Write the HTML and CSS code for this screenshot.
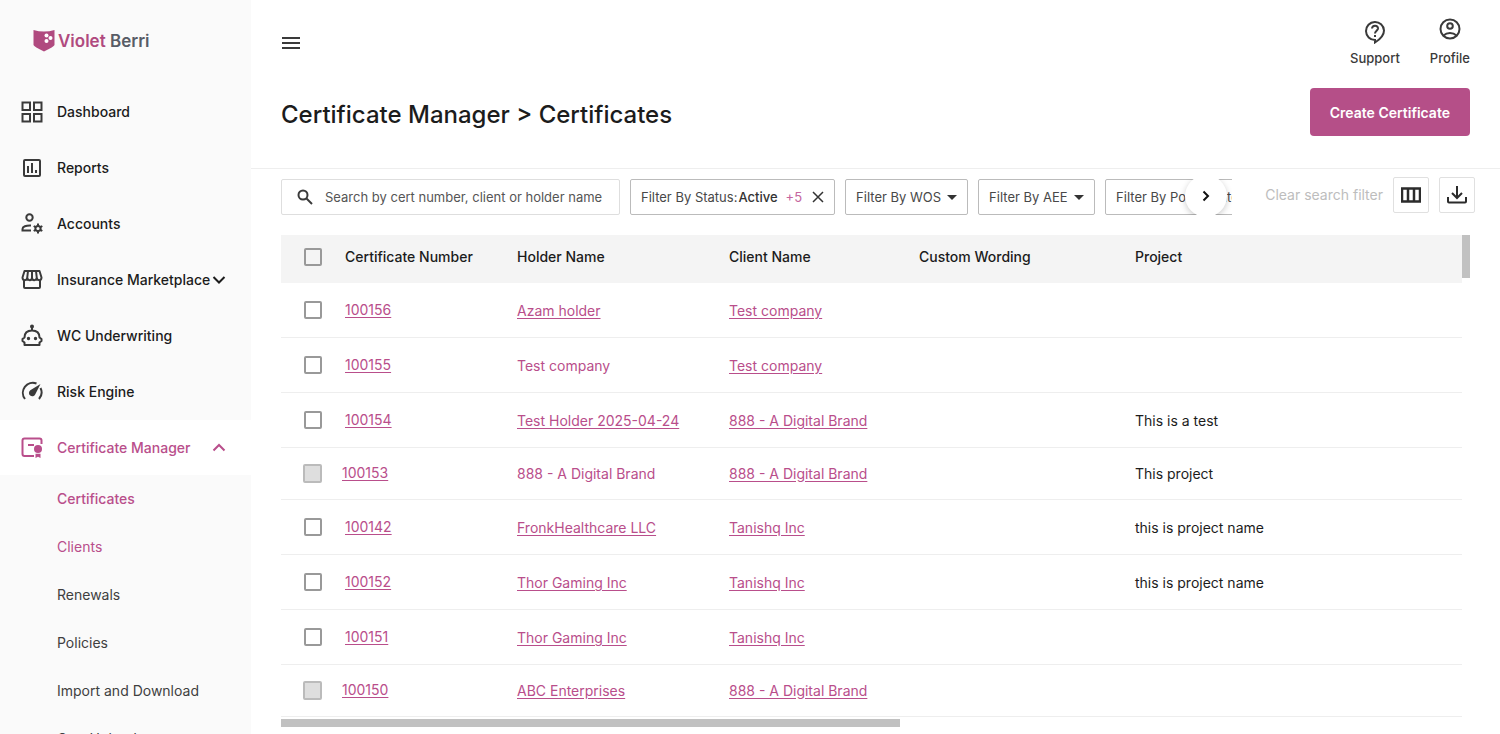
FILE: index.html
```html
<!DOCTYPE html>
<html lang="en">
<head>
    <meta charset="UTF-8">
    <meta name="viewport" content="width=device-width, initial-scale=1.0">
    <title>Certificate Manager</title>
    <link rel="stylesheet" href="styles.css">
</head>
<body>
    <aside class="sidebar">
        <a class="logo" href="#">
            <svg width="22" height="23" viewBox="0 0 22 23">
                <path d="M.5 1Q11 4 21.500 1V16Q21 17.500 11 22.500Q1 17.500 .5 16Z" fill="#b04a7f"/>
                <circle cx="13.500" cy="6.500" r="2" fill="#fff"/>
                <circle cx="17.500" cy="9" r="2" fill="#fff"/>
                <circle cx="13.500" cy="12" r="2" fill="#fff"/>
            </svg>
            <span class="logo-text"><span class="logo-violet">Violet</span> Berri</span>
        </a>
        <nav class="menu">
            <a class="menu-item" href="#">
                <svg class="icon" viewBox="0 0 24 24" fill="none" stroke="currentColor" stroke-width="2"><path d="M2.500 2.500h7.500v7.500H2.500zM14 2.500h7.500v7.500H14zM2.500 14h7.500v7.500H2.500zM14 14h7.500v7.500H14z"/></svg>
                <span>Dashboard</span>
            </a>
            <a class="menu-item" href="#">
                <svg class="icon" viewBox="0 0 24 24" fill="none" stroke="currentColor" stroke-width="2"><rect x="4" y="4" width="16" height="16" rx="1"/><path d="M8 10v7M12 7v10M16 14v3"/></svg>
                <span>Reports</span>
            </a>
            <a class="menu-item" href="#">
                <svg class="icon" viewBox="0 0 24 24" fill="none" stroke="currentColor" stroke-width="2"><circle cx="9.500" cy="5.500" r="3.200"/><path d="M11 18.500H2.500V17c0-2.500 3.500-3.700 8.500-3.500"/><circle cx="18" cy="16.500" r="2.600"/><path d="M18 11.500v2.200M18 19.300v2.200M13.700 14l1.900 1.100M20.400 17.900l1.900 1.100M13.700 19l1.900-1.100M20.400 15.100l1.900-1.100"/></svg>
                <span>Accounts</span>
            </a>
            <a class="menu-item" href="#">
                <svg class="icon" viewBox="0 0 24 24" fill="none" stroke="currentColor" stroke-width="2"><path d="M4 11.500v7.500q0 1 1 1h14q1 0 1-1v-7.500M4.500 3h15l2 6.500c0 3.500-4.500 3.500-4.750 0c-.25 3.500-4.750 3.500-4.750 0c0 3.500-4.500 3.500-4.750 0c-.25 3.500-4.750 3.500-4.750 0zM8 3l-.75 6.500M12 3v6.500M16 3l.75 6.500" stroke-linejoin="round"/></svg>
                <span>Insurance Marketplace</span>
                <svg class="chevron" viewBox="0 0 14 14" fill="none" stroke="currentColor" stroke-width="2"><path d="M1.500 4L7 9.500L12.500 4"/></svg>
            </a>
            <a class="menu-item" href="#">
                <svg class="icon" viewBox="0 0 24 24" fill="none" stroke="currentColor" stroke-width="2"><path d="M12 2v4M4.500 21v-2.500L2.500 17v-2l2-1.500C4.500 8.500 7.500 6.500 12 6.500s7.500 2 7.500 7l2 1.500v2l-2 1.500V21z" stroke-linejoin="round"/><circle cx="12" cy="2.500" r="1" fill="currentColor"/><circle cx="8.500" cy="14.500" r=".7" fill="currentColor"/><circle cx="15.500" cy="14.500" r=".7" fill="currentColor"/></svg>
                <span>WC Underwriting</span>
            </a>
            <a class="menu-item" href="#">
                <svg class="icon" viewBox="0 0 24 24"><path d="M5 19A10 10 0 0 1 16.500 3.500M20.500 8A10 10 0 0 1 19 19" fill="none" stroke="currentColor" stroke-width="2"/><path d="M20.500 4L15.300 14.200A3.300 3.300 0 1 1 10.300 10.300Z" fill="currentColor"/></svg>
                <span>Risk Engine</span>
            </a>
            <a class="menu-item active" href="#">
                <svg class="icon" viewBox="0 0 24 24"><path d="M21.500 8V4.500Q21.500 2.500 19.500 2.500H4.500Q2.500 2.500 2.500 4.500V18Q2.500 20 4.500 20H14M8 9h6" fill="none" stroke="currentColor" stroke-width="2"/><circle cx="18" cy="13" r="4" fill="currentColor"/><path d="M15.500 17.800h5V22l-2.500-1.200L15.500 22z" fill="currentColor"/></svg>
                <span>Certificate Manager</span>
                <svg class="chevron" viewBox="0 0 14 14" fill="none" stroke="currentColor" stroke-width="2"><path d="M1.500 9.500L7 4L12.500 9.500"/></svg>
            </a>
            <a class="submenu-item current" href="#">Certificates</a>
            <a class="submenu-item violet" href="#">Clients</a>
            <a class="submenu-item" href="#">Renewals</a>
            <a class="submenu-item" href="#">Policies</a>
            <a class="submenu-item" href="#">Import and Download</a>
            <a class="submenu-item" href="#">Cert Uploads</a>
        </nav>
    </aside>

    <main class="main">
        <header class="topbar">
            <button class="burger" type="button" aria-label="Menu">
                <svg width="20" height="14" viewBox="0 0 20 14" stroke="currentColor" stroke-width="2"><path d="M1 2h18M1 7h18M1 12h18"/></svg>
            </button>
            <div class="topbar-links">
                <a class="top-link support" href="#">
                    <svg class="icon" viewBox="0 0 24 24" fill="none" stroke="currentColor" stroke-width="2"><path d="M12 20v2.500c4-2.500 9-6.500 9-12a9 9 0 1 0-9 9.500z"/><path d="M9 8.500c.3-4 6.300-3.700 6 .2c-.2 2-3 2.300-3 4.800M12 15v2"/></svg>
                    <span>Support</span>
                </a>
                <a class="top-link" href="#">
                    <svg class="icon" viewBox="0 0 24 24" fill="none" stroke="currentColor" stroke-width="2"><circle cx="12" cy="12" r="9.500"/><circle cx="12" cy="9" r="2.800"/><path d="M5.500 18.500c3.500-3.300 9.500-3.300 13 0"/></svg>
                    <span>Profile</span>
                </a>
            </div>
        </header>

        <div class="title-row">
            <h1>Certificate Manager &gt; Certificates</h1>
            <button class="create-btn" type="button">Create Certificate</button>
        </div>

        <section class="toolbar">
            <label class="search">
                <svg width="16" height="16" viewBox="0 0 16 16" fill="none" stroke="currentColor" stroke-width="2"><circle cx="6" cy="6" r="4.500"/><path d="M9.500 9.500l5.500 5.500"/></svg>
                <input type="text" placeholder="Search by cert number, client or holder name" aria-label="Search certificates">
            </label>
            <div class="filters">
                <div class="filter-strip">
                    <div class="filter">
                        <span>Filter By Status:</span>
                        <b>Active</b>
                        <span class="more">+5</span>
                        <button class="clear-status" type="button" aria-label="Clear status">
                            <svg width="12" height="12" viewBox="0 0 12 12" stroke="currentColor" stroke-width="1.500"><path d="M1 1l10 10M11 1L1 11"/></svg>
                        </button>
                    </div>
                    <label class="filter">
                        <select aria-label="WOS"><option>Filter By WOS</option></select>
                        <svg class="arrow" viewBox="0 0 10 5"><path d="M0 0h10L5 5z"/></svg>
                    </label>
                    <label class="filter">
                        <select aria-label="AEE"><option>Filter By AEE</option></select>
                        <svg class="arrow" viewBox="0 0 10 5"><path d="M0 0h10L5 5z"/></svg>
                    </label>
                    <label class="filter">
                        <select aria-label="Policy date"><option>Filter By Policy Date</option></select>
                        <svg class="arrow" viewBox="0 0 10 5"><path d="M0 0h10L5 5z"/></svg>
                    </label>
                </div>
                <button class="next" type="button" aria-label="More filters">
                    <svg width="8" height="12" viewBox="0 0 8 12" fill="none" stroke="currentColor" stroke-width="2"><path d="M1.500 1.500L6 6l-4.500 4.500"/></svg>
                </button>
            </div>
            <div class="actions">
                <button class="clear-filter" type="button" disabled>Clear search filter</button>
                <button class="icon-btn" type="button" aria-label="Columns">
                    <svg width="20" height="16" viewBox="0 0 20 16" fill="none" stroke="currentColor" stroke-width="2"><path d="M1 1.500h18v13H1zM7 1v14M13 1v14" stroke-width="2.500"/></svg>
                </button>
                <button class="icon-btn" type="button" aria-label="Download">
                    <svg width="20" height="18" viewBox="0 0 20 18" fill="none" stroke="currentColor" stroke-width="2"><path d="M10 0v12M5 7l5 5l5-5M1 11v4.500q0 1 1 1h16q1 0 1-1V11"/></svg>
                </button>
            </div>
        </section>

        <section class="table-area">
            <table class="certs">
                <colgroup>
                    <col class="col-number">
                    <col class="col-holder">
                    <col class="col-client">
                    <col class="col-wording">
                    <col>
                </colgroup>
                <thead>
                    <tr>
                        <th><div class="number-cell"><input type="checkbox" aria-label="Select all"><span>Certificate Number</span></div></th>
                        <th>Holder Name</th>
                        <th>Client Name</th>
                        <th>Custom Wording</th>
                        <th>Project</th>
                    </tr>
                </thead>
                <tbody>
                    <tr>
                        <td><div class="number-cell"><input type="checkbox" aria-label="100156"><a href="#">100156</a></div></td>
                        <td><a href="#">Azam holder</a></td>
                        <td><a href="#">Test company</a></td>
                        <td></td>
                        <td></td>
                    </tr>
                    <tr>
                        <td><div class="number-cell"><input type="checkbox" aria-label="100155"><a href="#">100155</a></div></td>
                        <td><span class="violet">Test company</span></td>
                        <td><a href="#">Test company</a></td>
                        <td></td>
                        <td></td>
                    </tr>
                    <tr>
                        <td><div class="number-cell"><input type="checkbox" aria-label="100154"><a href="#">100154</a></div></td>
                        <td><a href="#">Test Holder 2025-04-24</a></td>
                        <td><a href="#">888 - A Digital Brand</a></td>
                        <td></td>
                        <td>This is a test</td>
                    </tr>
                    <tr class="locked">
                        <td><div class="number-cell"><input type="checkbox" aria-label="100153" disabled><a href="#">100153</a></div></td>
                        <td><span class="violet">888 - A Digital Brand</span></td>
                        <td><a href="#">888 - A Digital Brand</a></td>
                        <td></td>
                        <td>This project</td>
                    </tr>
                    <tr>
                        <td><div class="number-cell"><input type="checkbox" aria-label="100142"><a href="#">100142</a></div></td>
                        <td><a href="#">FronkHealthcare LLC</a></td>
                        <td><a href="#">Tanishq Inc</a></td>
                        <td></td>
                        <td>this is project name</td>
                    </tr>
                    <tr>
                        <td><div class="number-cell"><input type="checkbox" aria-label="100152"><a href="#">100152</a></div></td>
                        <td><a href="#">Thor Gaming Inc</a></td>
                        <td><a href="#">Tanishq Inc</a></td>
                        <td></td>
                        <td>this is project name</td>
                    </tr>
                    <tr>
                        <td><div class="number-cell"><input type="checkbox" aria-label="100151"><a href="#">100151</a></div></td>
                        <td><a href="#">Thor Gaming Inc</a></td>
                        <td><a href="#">Tanishq Inc</a></td>
                        <td></td>
                        <td></td>
                    </tr>
                    <tr class="locked">
                        <td><div class="number-cell"><input type="checkbox" aria-label="100150" disabled><a href="#">100150</a></div></td>
                        <td><a href="#">ABC Enterprises</a></td>
                        <td><a href="#">888 - A Digital Brand</a></td>
                        <td></td>
                        <td></td>
                    </tr>
                </tbody>
            </table>
            <div class="scroll-y"></div>
            <div class="scroll-x"></div>
        </section>
    </main>
</body>
</html>
```

FILE: styles.css
```css
* {
    box-sizing: border-box;
}

body {
    margin: 0;
    height: 100vh;
    display: flex;
    overflow: hidden;
    background-color: #fff;
    color: #1c1c1c;
    font-family: Inter, "Liberation Sans", sans-serif;
    font-size: 14px;
    line-height: 20px;
}

button,
input,
select {
    font: inherit;
    color: inherit;
}

button {
    padding: 0;
    border: none;
    background: none;
    cursor: pointer;
}

svg {
    display: block;
    flex-shrink: 0;
}

.icon {
    width: 24px;
    height: 24px;
    color: #3a3a3a;
}

.violet {
    color: #b94e8b;
}

/* sidebar */
.sidebar {
    width: 251px;
    flex-shrink: 0;
    background-color: #fafafa;
    overflow: hidden;
}

.logo {
    display: flex;
    align-items: center;
    gap: 3px;
    height: 84px;
    padding: 0 0 3px 33px;
    text-decoration: none;
}

.logo-text {
    font-size: 17px;
    font-weight: 600;
    color: #585c66;
}

.logo-violet {
    color: #b04a7f;
}

.menu-item {
    display: flex;
    align-items: center;
    height: 56px;
    padding: 0 25px 0 20px;
    color: #1c1c1c;
    font-weight: 500;
    text-decoration: none;
    white-space: nowrap;
}

.menu-item .icon {
    margin-right: 13px;
}

.menu-item.active {
    height: 55px;
    background-color: #fff;
}

.menu-item.active,
.menu-item.active .icon {
    color: #b94e8b;
}

.chevron {
    width: 14px;
    height: 14px;
    margin-left: auto;
}

.submenu-item {
    display: flex;
    align-items: center;
    height: 48px;
    padding-left: 57px;
    color: #3f3f3f;
    text-decoration: none;
}

.submenu-item.current {
    color: #b94e8b;
    font-weight: 500;
}

.submenu-item.violet {
    color: #b94e8b;
}

/* header */
.main {
    flex: 1;
    min-width: 0;
}

.topbar {
    display: flex;
    justify-content: space-between;
    height: 88px;
    padding: 17px 30px 0;
}

.burger {
    align-self: flex-start;
    margin-top: 19px;
    color: #3a3a3a;
}

.topbar-links {
    display: flex;
    gap: 30px;
}

.top-link {
    display: flex;
    flex-direction: column;
    align-items: center;
    gap: 7px;
    color: #3a3a3a;
    font-size: 13px;
    font-weight: 500;
    text-decoration: none;
}

.support .icon {
    margin: 3px 0 -3px;
}

.title-row {
    display: flex;
    justify-content: space-between;
    align-items: flex-start;
    height: 81px;
    padding: 0 30px;
    border-bottom: 1px solid #eee;
}

h1 {
    margin: 11px 0 0;
    font-size: 24px;
    line-height: 32px;
    font-weight: 500;
}

.create-btn {
    height: 48px;
    padding: 2px 20px 0;
    border-radius: 4px;
    background-color: #b54f88;
    color: #fff;
    font-weight: 600;
}

/* search and filters */
.toolbar {
    display: flex;
    align-items: flex-start;
    gap: 10px;
    padding: 10px 25px 0 30px;
}

.search {
    display: flex;
    align-items: center;
    gap: 12px;
    width: 339px;
    height: 36px;
    padding: 0 15px;
    border: 1px solid #dedede;
    border-radius: 2px;
    color: #3a3a3a;
    font-size: 13px;
}

.search input {
    flex: 1;
    min-width: 0;
    padding: 0;
    border: none;
    outline: none;
    background: none;
}

.search input::placeholder {
    color: #555;
    opacity: 1;
}

.filters {
    position: relative;
    flex: 1;
    min-width: 0;
    overflow: hidden;
}

.filter-strip {
    display: flex;
    gap: 10px;
}

.filter {
    display: flex;
    flex-shrink: 0;
    align-items: center;
    height: 36px;
    padding: 0 10px;
    border: 1px solid #bbb;
    border-radius: 2px;
    color: #484848;
    font-size: 13px;
    white-space: nowrap;
}

.filter b {
    margin-left: 1px;
    color: #333;
    font-weight: 500;
}

.filter select {
    padding: 0;
    border: none;
    outline: none;
    background: none;
    appearance: none;
}

.more {
    margin-left: 8px;
    color: #c566a0;
}

.clear-status {
    margin-left: 10px;
    color: #333;
}

.arrow {
    width: 10px;
    height: 5px;
    margin-left: 6px;
    fill: #333;
}

.next {
    position: absolute;
    top: -4px;
    right: 5px;
    display: flex;
    align-items: center;
    justify-content: center;
    width: 42px;
    height: 42px;
    border-radius: 50%;
    background-color: #fff;
    box-shadow: 0 2px 6px rgba(0, 0, 0, 0.2);
    color: #111;
}

.actions {
    display: flex;
    gap: 10px;
    margin: -2px 0 0 23px;
}

.clear-filter {
    color: #bdbdbd;
}

.icon-btn {
    display: flex;
    align-items: center;
    justify-content: center;
    width: 36px;
    height: 36px;
    border: 1px solid #e0e0e0;
    border-radius: 2px;
    color: #2b2b2b;
}

/* table */
.table-area {
    position: relative;
    margin: 20px 38px 0 30px;
}

.certs {
    width: 100%;
    table-layout: fixed;
    border-collapse: separate;
    border-spacing: 0;
}

.col-number,
.col-wording {
    width: 216px;
}

.col-holder {
    width: 212px;
}

.col-client {
    width: 190px;
}

.certs th {
    height: 48px;
    padding: 0 20px 4px;
    background-color: #f4f4f4;
    font-weight: 500;
    text-align: left;
}

.certs td {
    height: 55px;
    padding: 2px 20px 0;
    border-bottom: 1px solid #eee;
    white-space: nowrap;
}

.certs .locked td {
    height: 52px;
    padding-top: 0;
}

.certs a {
    color: #b94e8b;
    text-underline-offset: 2px;
}

.number-cell {
    display: flex;
    align-items: center;
    gap: 23px;
    margin-left: 3px;
}

td .number-cell {
    padding-bottom: 3px;
}

.locked .number-cell {
    gap: 20px;
    margin-left: 2px;
    padding-bottom: 1px;
}

.number-cell input {
    appearance: none;
    width: 18px;
    height: 18px;
    margin: 0;
    border: 2px solid #999;
    border-radius: 2px;
}

.number-cell input:disabled {
    width: 19px;
    height: 19px;
    border-color: #bbb;
    background-color: #dedede;
}

.scroll-x,
.scroll-y {
    position: absolute;
    background-color: #c1c1c1;
}

.scroll-x {
    left: 0;
    right: 562px;
    bottom: -10px;
    height: 8px;
}

.scroll-y {
    top: 0;
    right: -8px;
    width: 8px;
    height: 43px;
}
```
